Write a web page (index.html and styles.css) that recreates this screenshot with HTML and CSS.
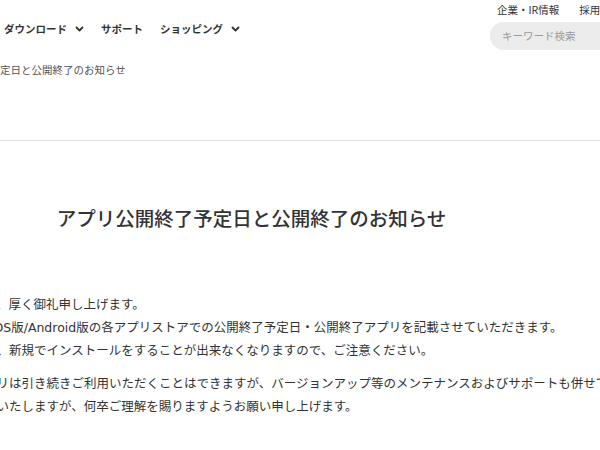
FILE: index.html
```html
<!DOCTYPE html>
<html lang="ja">
<head>
<meta charset="utf-8">
<title>アプリ公開終了予定日と公開終了のお知らせ</title>
<link rel="stylesheet" href="styles.css">
</head>
<body>
<header class="site-header">
  <div class="header-row">
    <nav class="gnav">
      <a class="gnav-item">製品情報<svg class="chev" viewBox="0 0 9 6" width="9" height="6"><path d="M1.5 1.5 L4.5 4.5 L7.5 1.5" /></svg></a>
      <a class="gnav-item">ダウンロード<svg class="chev" viewBox="0 0 9 6" width="9" height="6"><path d="M1.5 1.5 L4.5 4.5 L7.5 1.5" /></svg></a>
      <a class="gnav-item">サポート</a>
      <a class="gnav-item">ショッピング<svg class="chev" viewBox="0 0 9 6" width="9" height="6"><path d="M1.5 1.5 L4.5 4.5 L7.5 1.5" /></svg></a>
    </nav>
    <div class="util">
      <ul class="util-links">
        <li>企業・IR情報</li>
        <li>採用</li>
        <li>English</li>
      </ul>
      <div class="search">キーワード検索</div>
    </div>
  </div>
  <div class="crumbs">アプリ公開終了予定日と公開終了のお知らせ</div>
</header>
<main class="article">
  <h1 class="title">アプリ公開終了予定日と公開終了のお知らせ</h1>
  <div class="body">
    <p class="para">賜り、厚く御礼申し上げます。<br>※&nbsp; iOS版/Android版の各アプリストアでの公開終了予定日・公開終了アプリを記載させていただきます。<br>後は、新規でインストールをすることが出来なくなりますので、ご注意ください。</p>
    <p class="para">アプリは引き続きご利用いただくことはできますが、バージョンアップ等のメンテナンスおよびサポートも併せて<br>終了いたしますが、何卒ご理解を賜りますようお願い申し上げます。</p>
  </div>
</main>
</body>
</html>
```

FILE: styles.css
```css
html, body {
  margin: 0;
  padding: 0;
  background: #fff;
  overflow: hidden;
}
body {
  width: 600px;
  height: 450px;
  color: #333;
  font-family: "Noto Sans CJK JP", "Noto Sans", sans-serif;
}
.site-header {
  height: 140px;
  border-bottom: 1px solid #dedede;
}
.header-row {
  display: flex;
  align-items: flex-start;
  margin-left: -72px;
  width: 717px;
}
.gnav {
  display: flex;
  gap: 17px;
  margin-top: 22px;
}
.gnav-item {
  display: flex;
  align-items: center;
  font-size: 10.5px;
  line-height: 14px;
  font-weight: 700;
  color: #333;
  white-space: nowrap;
}
.chev {
  margin-left: 8px;
  fill: none;
  stroke: #333;
  stroke-width: 1.8;
  stroke-linecap: round;
  stroke-linejoin: round;
}
.util {
  margin-left: auto;
  width: 155px;
}
.util-links {
  display: flex;
  gap: 20px;
  list-style: none;
  margin: 3px 0 0;
  padding: 0 0 0 7px;
  font-size: 10.5px;
  line-height: 14px;
  color: #333;
  white-space: nowrap;
}
.search {
  margin-top: 5px;
  height: 28px;
  border-radius: 14px;
  background: #ececec;
  padding-left: 12px;
  font-size: 10.5px;
  line-height: 28px;
  color: #9a9a9a;
  white-space: nowrap;
}
.crumbs {
  margin: 13px 0 0 -84px;
  font-size: 10.5px;
  line-height: 14px;
  color: #555;
  white-space: nowrap;
}
.article {
  margin-left: -28.5px;
  width: 560px;
}
.title {
  margin: 63px 0 0;
  text-align: center;
  font-size: 19.5px;
  line-height: 28px;
  font-weight: 500;
  color: #333;
  white-space: nowrap;
}
.body {
  margin-top: 60.5px;
  font-family: "DejaVu Sans", "Noto Sans CJK JP", sans-serif;
  font-size: 12.5px;
  line-height: 23px;
  color: #333;
}
.para {
  margin: 0 0 10px;
  white-space: nowrap;
}
```
